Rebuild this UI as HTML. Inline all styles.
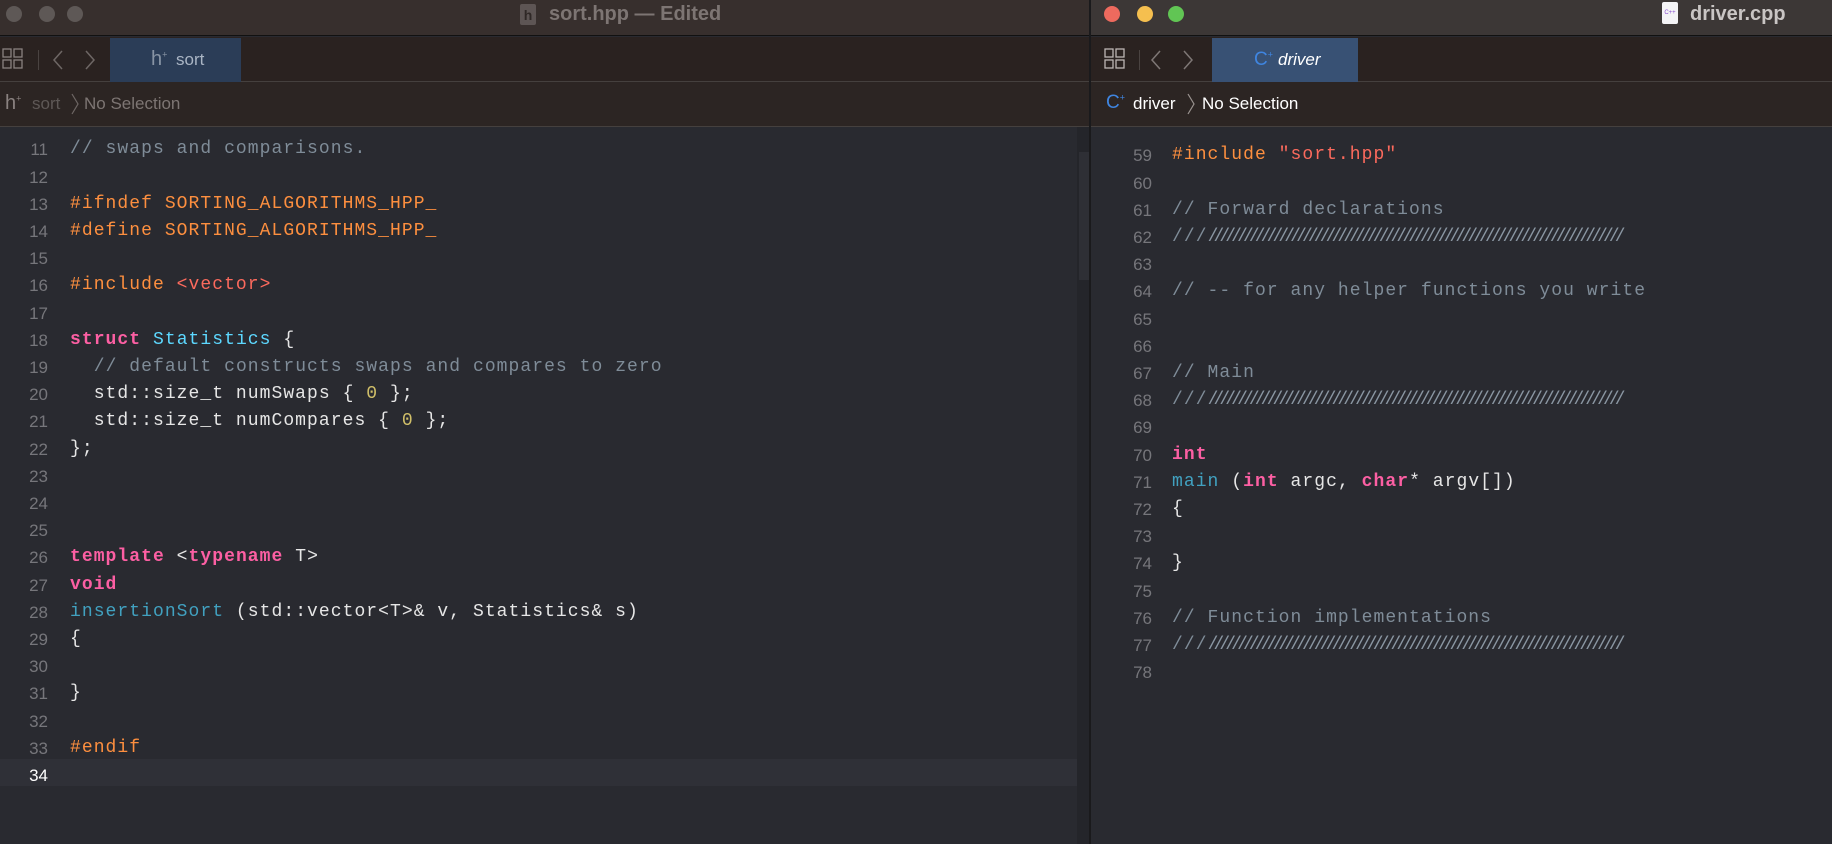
<!DOCTYPE html>
<html><head><meta charset="utf-8"><style>
*{margin:0;padding:0;box-sizing:border-box}
body{width:1832px;height:844px;overflow:hidden;background:#292a30;position:relative;font-family:"Liberation Sans",sans-serif}
.abs{position:absolute}
.code{position:absolute;font-family:"Liberation Mono",monospace;font-size:18px;letter-spacing:1.05px;white-space:pre;color:#e6e6e6;line-height:27.2px;height:27.2px}
.ln{position:absolute;font-family:"Liberation Sans",sans-serif;font-size:17px;color:#76767b;text-align:right;width:40px;line-height:27.2px;height:27.2px}
.c{color:#7f8c98}.k{color:#fc5fa3;font-weight:bold}.p{color:#fd8f3f}.s{color:#fc6a5d}.n{color:#d0bf69}.t{color:#5dd8ff}.f{color:#41a1c0}
.dot{position:absolute;width:16px;height:16px;border-radius:50%;top:6px}
.hatch{display:inline-block;letter-spacing:-4.9px;color:#8a96a2}
</style></head><body>

<div class="abs" style="left:0;top:0;width:1090px;height:36px;background:#372f2d;border-bottom:1px solid #111"></div>
<div class="dot" style="left:6px;background:#5e5856"></div>
<div class="dot" style="left:39px;background:#5e5856"></div>
<div class="dot" style="left:67px;background:#5e5856"></div>
<div class="abs" style="left:520px;top:4px;width:16px;height:21px;background:#5d5554;border-radius:2px;color:#2f2826;font-size:14px;font-weight:bold;text-align:center;line-height:22px">h</div>
<div class="abs" style="left:549px;top:3px;font-size:20px;font-weight:bold;color:#7d7573">sort.hpp — Edited</div>

<div class="abs" style="left:0;top:37px;width:1090px;height:45px;background:#2a2220;border-bottom:1px solid #45403e"></div>
<svg class="abs" style="left:2px;top:48px" width="22" height="22" viewBox="0 0 22 22" fill="none" stroke="#8a8280" stroke-width="1.3"><rect x="1" y="1" width="8" height="8"/><rect x="12" y="1" width="8" height="8"/><rect x="1" y="12" width="8" height="8"/><rect x="12" y="12" width="8" height="8"/></svg>
<div class="abs" style="left:38px;top:50px;width:1px;height:20px;background:#4a4341"></div>
<svg class="abs" style="left:50px;top:48px" width="50" height="24" viewBox="0 0 50 24" fill="none" stroke="#6e6765" stroke-width="1.5"><path d="M12 3 L4 12 L12 21"/><path d="M36 3 L44 12 L36 21"/></svg>
<div class="abs" style="left:110px;top:38px;width:131px;height:44px;background:#2b3d57"></div>
<div class="abs" style="left:151px;top:48px;font-size:20px;color:#8894a4">h<sup style="font-size:9px">+</sup></div>
<div class="abs" style="left:176px;top:50px;font-size:17px;color:#aab5c4">sort</div>

<div class="abs" style="left:0;top:82px;width:1090px;height:45px;background:#2c2523;border-bottom:1px solid #45403e"></div>
<div class="abs" style="left:5px;top:92px;font-size:20px;color:#8a8280">h<sup style="font-size:9px">+</sup></div>
<div class="abs" style="left:32px;top:94px;font-size:17px;color:#5e5856">sort</div>
<svg class="abs" style="left:70px;top:92px" width="10" height="24" viewBox="0 0 10 24" fill="none" stroke="#6e6765" stroke-width="1.2"><path d="M2 2 L8 12 L2 22"/></svg>
<div class="abs" style="left:84px;top:94px;font-size:17px;color:#7d7573">No Selection</div>

<div class="abs" style="left:0;top:759px;width:1077px;height:27px;background:#2f3037"></div>
<div class="abs" style="left:1077px;top:127px;width:12px;height:717px;background:#24252a"></div>
<div class="abs" style="left:1079px;top:152px;width:10px;height:128px;background:#2e2f35"></div>
<div class="abs" style="left:1089px;top:0;width:2px;height:844px;background:#1a1a1c"></div>

<div id="left"></div>

<div class="abs" style="left:1091px;top:0;width:741px;height:36px;background:#3c3736;border-bottom:1px solid #111"></div>
<div class="dot" style="left:1104px;background:#ed6a5e"></div>
<div class="dot" style="left:1137px;background:#f5bf4f"></div>
<div class="dot" style="left:1168px;background:#61c554"></div>
<div class="abs" style="left:1662px;top:2px;width:16px;height:22px;background:#f4f4f6;border-radius:2px;color:#8a4fd0;font-size:6px;text-align:center;line-height:22px">C++</div>
<div class="abs" style="left:1690px;top:3px;font-size:20px;font-weight:bold;color:#c9c5c4">driver.cpp</div>

<div class="abs" style="left:1091px;top:37px;width:741px;height:45px;background:#2a2220;border-bottom:1px solid #45403e"></div>
<svg class="abs" style="left:1104px;top:48px" width="22" height="22" viewBox="0 0 22 22" fill="none" stroke="#bdb6b4" stroke-width="1.3"><rect x="1" y="1" width="8" height="8"/><rect x="12" y="1" width="8" height="8"/><rect x="1" y="12" width="8" height="8"/><rect x="12" y="12" width="8" height="8"/></svg>
<div class="abs" style="left:1139px;top:50px;width:1px;height:20px;background:#4a4341"></div>
<svg class="abs" style="left:1148px;top:48px" width="50" height="24" viewBox="0 0 50 24" fill="none" stroke="#7e7775" stroke-width="1.5"><path d="M12 3 L4 12 L12 21"/><path d="M36 3 L44 12 L36 21"/></svg>
<div class="abs" style="left:1212px;top:38px;width:146px;height:44px;background:#385174"></div>
<div class="abs" style="left:1254px;top:49px;font-size:19px;color:#3f85e0">C<sup style="font-size:9px">+</sup></div>
<div class="abs" style="left:1278px;top:50px;font-size:17px;color:#fff;font-style:italic">driver</div>

<div class="abs" style="left:1091px;top:82px;width:741px;height:45px;background:#2c2523;border-bottom:1px solid #45403e"></div>
<div class="abs" style="left:1106px;top:92px;font-size:19px;color:#3f85e0">C<sup style="font-size:9px">+</sup></div>
<div class="abs" style="left:1133px;top:94px;font-size:17px;color:#fff">driver</div>
<svg class="abs" style="left:1186px;top:92px" width="10" height="24" viewBox="0 0 10 24" fill="none" stroke="#9a9390" stroke-width="1.2"><path d="M2 2 L8 12 L2 22"/></svg>
<div class="abs" style="left:1202px;top:94px;font-size:17px;color:#fff">No Selection</div>

<div id="right"></div>

<script>
function put(el,x0,nx,y0,lines){var h='';lines.forEach(function(l,i){var y=y0+i*27.2-13.6;h+='<div class="ln" style="left:'+nx+'px;top:'+y+'px;'+(l[2]||'')+'">'+l[0]+'</div><div class="code" style="left:'+x0+'px;top:'+y+'px">'+l[1]+'</div>';});document.getElementById(el).innerHTML=h;}
var L=[
['11','<span class="c">// swaps and comparisons.</span>'],
['12',''],
['13','<span class="p">#ifndef SORTING_ALGORITHMS_HPP_</span>'],
['14','<span class="p">#define SORTING_ALGORITHMS_HPP_</span>'],
['15',''],
['16','<span class="p">#include </span><span class="s">&lt;vector&gt;</span>'],
['17',''],
['18','<span class="k">struct</span> <span class="t">Statistics</span> {'],
['19','  <span class="c">// default constructs swaps and compares to zero</span>'],
['20','  std::size_t numSwaps { <span class="n">0</span> };'],
['21','  std::size_t numCompares { <span class="n">0</span> };'],
['22','};'],
['23',''],['24',''],['25',''],
['26','<span class="k">template</span> &lt;<span class="k">typename</span> T&gt;'],
['27','<span class="k">void</span>'],
['28','<span class="f">insertionSort</span> (std::vector&lt;T&gt;&amp; v, Statistics&amp; s)'],
['29','{'],
['30',''],
['31','}'],
['32',''],
['33','<span class="p">#endif</span>'],
['34','','color:#fff']
];
put('left',70,8,150,L);
var hatch='<span class="c">///</span><span class="hatch">'+'/'.repeat(70)+'</span>';
var R=[
['59','<span class="p">#include </span><span class="s">"sort.hpp"</span>'],
['60',''],
['61','<span class="c">// Forward declarations</span>'],
['62',hatch],
['63',''],
['64','<span class="c">// -- for any helper functions you write</span>'],
['65',''],['66',''],
['67','<span class="c">// Main</span>'],
['68',hatch],
['69',''],
['70','<span class="k">int</span>'],
['71','<span class="f">main</span> (<span class="k">int</span> argc, <span class="k">char</span>* argv[])'],
['72','{'],
['73',''],
['74','}'],
['75',''],
['76','<span class="c">// Function implementations</span>'],
['77',hatch],
['78','']
];
put('right',1172,1112,156,R);
</script>
</body></html>
